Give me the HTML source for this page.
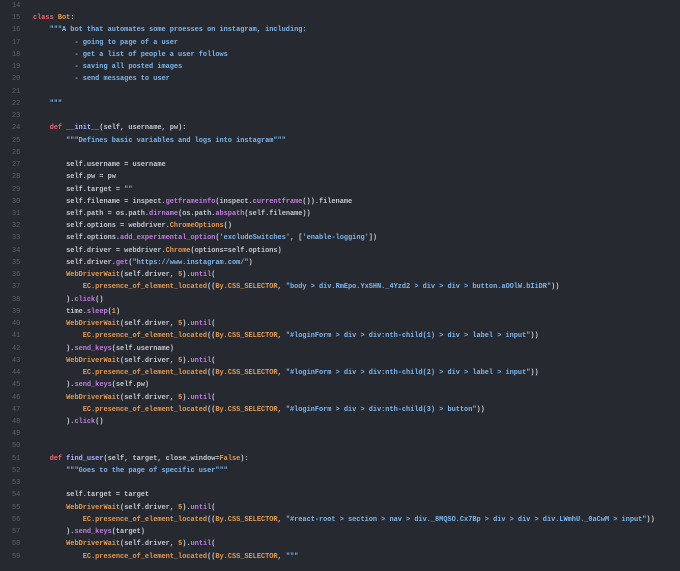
<!DOCTYPE html>
<html><head><meta charset="utf-8"><style>
html,body{margin:0;padding:0;background:#262930;width:680px;height:571px;overflow:hidden}
.c{position:absolute;left:0;top:0;font-family:"Liberation Mono",monospace;font-size:6.92px;line-height:12.24px;color:#c3c8d1;font-weight:bold}
.l{height:12.24px;white-space:pre}
.n{display:inline-block;width:33px;box-sizing:border-box;padding-left:12px;color:#5b6270;font-weight:normal}
.k{color:#e8636e}.o{color:#e39b52}.s{color:#7db7ee}.f{color:#a9b4ff}.p{color:#c27de0}
</style></head><body><div class="c">
<div class="l"><span class="n">14</span></div>
<div class="l"><span class="n">15</span><span class="k">class</span> <span class="o">Bot</span>:</div>
<div class="l"><span class="n">16</span>    <span class="s">"""A bot that automates some proesses on instagram, including:</span></div>
<div class="l"><span class="n">17</span><span class="s">          - going to page of a user</span></div>
<div class="l"><span class="n">18</span><span class="s">          - get a list of people a user follows</span></div>
<div class="l"><span class="n">19</span><span class="s">          - saving all posted images</span></div>
<div class="l"><span class="n">20</span><span class="s">          - send messages to user</span></div>
<div class="l"><span class="n">21</span></div>
<div class="l"><span class="n">22</span>    <span class="s">"""</span></div>
<div class="l"><span class="n">23</span></div>
<div class="l"><span class="n">24</span>    <span class="k">def</span> <span class="f">__init__</span>(self, username, pw):</div>
<div class="l"><span class="n">25</span>        <span class="s">"""Defines basic variables and logs into instagram"""</span></div>
<div class="l"><span class="n">26</span></div>
<div class="l"><span class="n">27</span>        self.username = username</div>
<div class="l"><span class="n">28</span>        self.pw = pw</div>
<div class="l"><span class="n">29</span>        self.target = <span class="s">""</span></div>
<div class="l"><span class="n">30</span>        self.filename = inspect.<span class="p">getframeinfo</span>(inspect.<span class="p">currentframe</span>()).filename</div>
<div class="l"><span class="n">31</span>        self.path = os.path.<span class="p">dirname</span>(os.path.<span class="p">abspath</span>(self.filename))</div>
<div class="l"><span class="n">32</span>        self.options = webdriver.<span class="o">ChromeOptions</span>()</div>
<div class="l"><span class="n">33</span>        self.options.<span class="p">add_experimental_option</span>(<span class="s">'excludeSwitches'</span>, [<span class="s">'enable-logging'</span>])</div>
<div class="l"><span class="n">34</span>        self.driver = webdriver.<span class="o">Chrome</span>(options=self.options)</div>
<div class="l"><span class="n">35</span>        self.driver.<span class="p">get</span>(<span class="s">"https://www.instagram.com/"</span>)</div>
<div class="l"><span class="n">36</span>        <span class="o">WebDriverWait</span>(self.driver, <span class="o">5</span>).<span class="p">until</span>(</div>
<div class="l"><span class="n">37</span>            <span class="o">EC.presence_of_element_located</span>((<span class="o">By.CSS_SELECTOR</span>, <span class="s">"body &gt; div.RmEpo.YxSHN._4Yzd2 &gt; div &gt; div &gt; button.aOOlW.bIiDR"</span>))</div>
<div class="l"><span class="n">38</span>        ).<span class="p">click</span>()</div>
<div class="l"><span class="n">39</span>        time.<span class="p">sleep</span>(<span class="o">1</span>)</div>
<div class="l"><span class="n">40</span>        <span class="o">WebDriverWait</span>(self.driver, <span class="o">5</span>).<span class="p">until</span>(</div>
<div class="l"><span class="n">41</span>            <span class="o">EC.presence_of_element_located</span>((<span class="o">By.CSS_SELECTOR</span>, <span class="s">"#loginForm &gt; div &gt; div:nth-child(1) &gt; div &gt; label &gt; input"</span>))</div>
<div class="l"><span class="n">42</span>        ).<span class="p">send_keys</span>(self.username)</div>
<div class="l"><span class="n">43</span>        <span class="o">WebDriverWait</span>(self.driver, <span class="o">5</span>).<span class="p">until</span>(</div>
<div class="l"><span class="n">44</span>            <span class="o">EC.presence_of_element_located</span>((<span class="o">By.CSS_SELECTOR</span>, <span class="s">"#loginForm &gt; div &gt; div:nth-child(2) &gt; div &gt; label &gt; input"</span>))</div>
<div class="l"><span class="n">45</span>        ).<span class="p">send_keys</span>(self.pw)</div>
<div class="l"><span class="n">46</span>        <span class="o">WebDriverWait</span>(self.driver, <span class="o">5</span>).<span class="p">until</span>(</div>
<div class="l"><span class="n">47</span>            <span class="o">EC.presence_of_element_located</span>((<span class="o">By.CSS_SELECTOR</span>, <span class="s">"#loginForm &gt; div &gt; div:nth-child(3) &gt; button"</span>))</div>
<div class="l"><span class="n">48</span>        ).<span class="p">click</span>()</div>
<div class="l"><span class="n">49</span></div>
<div class="l"><span class="n">50</span></div>
<div class="l"><span class="n">51</span>    <span class="k">def</span> <span class="f">find_user</span>(self, target, close_window=<span class="o">False</span>):</div>
<div class="l"><span class="n">52</span>        <span class="s">"""Goes to the page of specific user"""</span></div>
<div class="l"><span class="n">53</span></div>
<div class="l"><span class="n">54</span>        self.target = target</div>
<div class="l"><span class="n">55</span>        <span class="o">WebDriverWait</span>(self.driver, <span class="o">5</span>).<span class="p">until</span>(</div>
<div class="l"><span class="n">56</span>            <span class="o">EC.presence_of_element_located</span>((<span class="o">By.CSS_SELECTOR</span>, <span class="s">"#react-root &gt; section &gt; nav &gt; div._8MQSO.Cx7Bp &gt; div &gt; div &gt; div.LWmhU._0aCwM &gt; input"</span>))</div>
<div class="l"><span class="n">57</span>        ).<span class="p">send_keys</span>(target)</div>
<div class="l"><span class="n">58</span>        <span class="o">WebDriverWait</span>(self.driver, <span class="o">5</span>).<span class="p">until</span>(</div>
<div class="l"><span class="n">59</span>            <span class="o">EC.presence_of_element_located</span>((<span class="o">By.CSS_SELECTOR</span>, <span class="s">"""</span></div>
</div></body></html>
